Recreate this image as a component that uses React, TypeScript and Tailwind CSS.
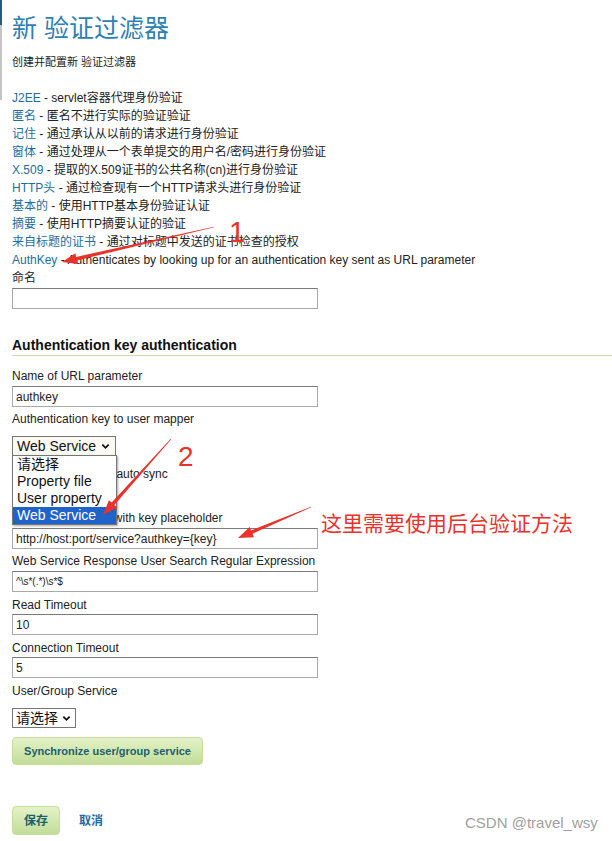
import type { ReactNode } from 'react'

const FONT = '"Liberation Sans", "Noto Sans CJK SC", Arial, sans-serif'

const filters: [string, string][] = [
  ['J2EE', 'servlet容器代理身份验证'],
  ['匿名', '匿名不进行实际的验证验证'],
  ['记住', '通过承认从以前的请求进行身份验证'],
  ['窗体', '通过处理从一个表单提交的用户名/密码进行身份验证'],
  ['X.509', '提取的X.509证书的公共名称(cn)进行身份验证'],
  ['HTTP头', '通过检查现有一个HTTP请求头进行身份验证'],
  ['基本的', '使用HTTP基本身份验证认证'],
  ['摘要', '使用HTTP摘要认证的验证'],
  ['来自标题的证书', '通过对标题中发送的证书检查的授权'],
  ['AuthKey', 'Authenticates by looking up for an authentication key sent as URL parameter'],
]

function Label({ children, className = '' }: { children: ReactNode; className?: string }) {
  return <div className={`h-[18px] text-[12px] leading-[18px] text-[#222] ${className}`}>{children}</div>
}

function Field({ value = '', small = false, className = '' }: { value?: string; small?: boolean; className?: string }) {
  return (
    <div
      className={`flex h-[21px] w-[306px] items-center border border-[#a9a9a9] border-t-[#7a7a7a] bg-white px-[3px] text-[#222] ${small ? 'text-[10px]' : 'text-[12px]'} ${className}`}
    >
      {value}
    </div>
  )
}

function Chevron() {
  return (
    <svg viewBox="0 0 10 10" className="h-[9px] w-[9px]" fill="none" stroke="#111" strokeWidth="2">
      <path d="M1.5 3 L5 6.5 L8.5 3" />
    </svg>
  )
}

function GreenButton({ children, className = '' }: { children: ReactNode; className?: string }) {
  return (
    <div
      className={`flex items-center justify-center rounded-[4px] border border-[#c4dc9c] bg-gradient-to-b from-[#e4f2c8] to-[#c2dd98] text-[11px] font-bold text-[#1d5e6e] ${className}`}
    >
      {children}
    </div>
  )
}

// tapered annotation arrow: thin tail, filled head at the tip
function Arrow({ x1, y1, x2, y2 }: { x1: number; y1: number; x2: number; y2: number }) {
  const dx = x2 - x1
  const dy = y2 - y1
  const len = Math.hypot(dx, dy)
  const ux = dx / len
  const uy = dy / len
  const nx = -uy
  const ny = ux
  const headLen = 15
  const headW = 5.5
  const shaftW = 1.8
  const bx = x2 - ux * headLen
  const by = y2 - uy * headLen
  const pts = [
    [x1 + nx * 0.3, y1 + ny * 0.3],
    [bx + nx * shaftW, by + ny * shaftW],
    [bx + nx * headW, by + ny * headW],
    [x2, y2],
    [bx - nx * headW, by - ny * headW],
    [bx - nx * shaftW, by - ny * shaftW],
    [x1 - nx * 0.3, y1 - ny * 0.3],
  ]
  return <polygon points={pts.map((p) => p.join(',')).join(' ')} fill="#e8322b" />
}

export default function App() {
  return (
    <div className="relative min-h-[841px] w-[612px] bg-white pt-[13px]" style={{ fontFamily: FONT }}>
      <div className="absolute left-0 top-0 flex w-[2px] flex-col">
        <div className="h-[25px] bg-[#1f5f80]" />
        <div className="h-[75px] bg-[#c4c4c4]" />
      </div>

      <div className="px-3">
        <h1 className="h-[30px] text-[25px] leading-[30px] text-[#2f7fb3]">新 验证过滤器</h1>
        <div className="mt-[10px] h-[18px] text-[11px] leading-[18px] text-[#222]">创建并配置新 验证过滤器</div>

        <ul className="mt-[18px]">
          {filters.map(([name, desc]) => (
            <li key={name} className="h-[18px] text-[12px] leading-[18px] text-[#222]">
              <span className="text-[#1e6d9e]">{name}</span> - {desc}
            </li>
          ))}
        </ul>

        <Label>命名</Label>
        <Field className="mt-px" />

        <h2 className="mt-[26px] -mr-3 h-[21px] border-b border-[#cdd9b8] text-[14px] font-bold leading-[20px] text-[#111]">
          Authentication key authentication
        </h2>

        <Label className="mt-[11px]">Name of URL parameter</Label>
        <Field value="authkey" className="mt-px" />

        <Label className="mt-[3px]">Authentication key to user mapper</Label>
        <div className="relative mt-[8px] w-[104px]">
          <div className="flex h-[20px] items-center justify-between border border-[#767676] bg-[#fafaf2] pl-[4px] pr-[5px] text-[14px] text-[#111]">
            Web Service
            <Chevron />
          </div>
          <ul className="absolute left-0 top-[19px] z-10 w-[105px] border border-[#767676] bg-white text-[14px] leading-[17px] text-[#111] shadow-[1px_1px_2px_rgba(0,0,0,0.35)]">
            <li className="pl-[4px]">请选择</li>
            <li className="pl-[4px]">Property file</li>
            <li className="pl-[4px]">User property</li>
            <li className="bg-[#1f62c9] pl-[4px] text-white">Web Service</li>
          </ul>
        </div>

        <div className="mt-[9px] flex h-[18px] items-center gap-[8px] text-[12px] text-[#222]">
          <span className="inline-block h-[13px] w-[13px] border border-[#767676]" />
          <span>Use cache and auto sync</span>
        </div>

        <Label className="mt-[26px]">Web Service URL, with key placeholder</Label>
        <Field value="http://host:port/service?authkey={key}" className="mt-px" />

        <Label className="mt-[3px]">Web Service Response User Search Regular Expression</Label>
        <Field value="^\s*(.*)\s*$" small className="mt-px" />

        <Label className="mt-[4px]">Read Timeout</Label>
        <Field value="10" />

        <Label className="mt-[4px]">Connection Timeout</Label>
        <Field value="5" />

        <Label className="mt-[4px]">User/Group Service</Label>
        <div className="mt-[8px] flex h-[20px] w-[64px] items-center justify-between border border-[#767676] bg-white pl-[3px] pr-[4px] text-[14px] text-[#111]">
          请选择
          <Chevron />
        </div>

        <GreenButton className="mt-[9px] h-[28px] w-[191px]">Synchronize user/group service</GreenButton>

        <div className="mt-[41px] flex items-center">
          <GreenButton className="h-[29px] w-[48px] text-[12px]">保存</GreenButton>
          <span className="ml-[19px] text-[12px] font-bold text-[#1e6d9e]">取消</span>
        </div>
      </div>

      <svg className="pointer-events-none absolute left-0 top-0 z-20" width="612" height="841">
        <Arrow x1={214} y1={227} x2={62} y2={262} />
        <Arrow x1={171} y1={439} x2={103} y2={515} />
        <Arrow x1={311} y1={507} x2={238} y2={538} />
      </svg>
      <div className="pointer-events-none absolute left-[229px] top-[215px] z-20 text-[29px] font-light leading-[34px] text-[#e8322b]">1</div>
      <div className="pointer-events-none absolute left-[178px] top-[440px] z-20 text-[28px] leading-[34px] text-[#e8322b]">2</div>
      <div
        className="pointer-events-none absolute left-[321px] top-[509px] z-20 text-[21px] leading-[26px] text-[#e8322b]"
        style={{ fontFamily: '"Noto Sans CJK SC", sans-serif' }}
      >
        这里需要使用后台验证方法
      </div>
      <div className="pointer-events-none absolute left-[465px] top-[813px] z-20 text-[15px] leading-[20px] text-[#a0a0a0]">
        CSDN @travel_wsy
      </div>
    </div>
  )
}
